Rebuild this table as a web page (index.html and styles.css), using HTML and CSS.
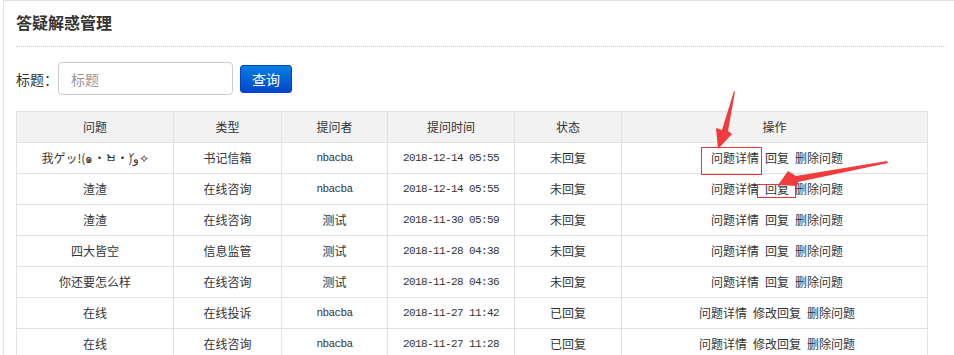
FILE: index.html
```html
<!DOCTYPE html>
<html lang="zh-CN">
<head>
<meta charset="utf-8">
<title>答疑解惑管理</title>
<link rel="stylesheet" href="styles.css">
</head>
<body>
<div class="page">
  <div class="panel">
    <h2 class="title">答疑解惑管理</h2>
    <form class="search">
      <label class="search-label">标题：</label>
      <input class="search-input" type="text" placeholder="标题">
      <button class="btn" type="button">查询</button>
    </form>
    <table class="grid">
      <colgroup>
        <col class="c1"><col class="c2"><col class="c3"><col class="c4"><col class="c5"><col class="c6">
      </colgroup>
      <thead>
        <tr><th>问题</th><th>类型</th><th>提问者</th><th>提问时间</th><th>状态</th><th>操作</th></tr>
      </thead>
      <tbody>
        <tr><td>我ゲッ!(๑•̀ㅂ•́)و✧</td><td>书记信箱</td><td class="mono">nbacba</td><td class="mono">2018-12-14 05:55</td><td>未回复</td><td class="ops"><a>问题详情</a><a>回复</a><a>删除问题</a></td></tr>
        <tr><td>渣渣</td><td>在线咨询</td><td class="mono">nbacba</td><td class="mono">2018-12-14 05:55</td><td>未回复</td><td class="ops"><a>问题详情</a><a>回复</a><a>删除问题</a></td></tr>
        <tr><td>渣渣</td><td>在线咨询</td><td>测试</td><td class="mono">2018-11-30 05:59</td><td>未回复</td><td class="ops"><a>问题详情</a><a>回复</a><a>删除问题</a></td></tr>
        <tr><td>四大皆空</td><td>信息监管</td><td>测试</td><td class="mono">2018-11-28 04:38</td><td>未回复</td><td class="ops"><a>问题详情</a><a>回复</a><a>删除问题</a></td></tr>
        <tr><td>你还要怎么样</td><td>在线咨询</td><td>测试</td><td class="mono">2018-11-28 04:36</td><td>未回复</td><td class="ops"><a>问题详情</a><a>回复</a><a>删除问题</a></td></tr>
        <tr><td>在线</td><td>在线投诉</td><td class="mono">nbacba</td><td class="mono">2018-11-27 11:42</td><td>已回复</td><td class="ops"><a>问题详情</a><a>修改回复</a><a>删除问题</a></td></tr>
        <tr><td>在线</td><td>在线咨询</td><td class="mono">nbacba</td><td class="mono">2018-11-27 11:28</td><td>已回复</td><td class="ops"><a>问题详情</a><a>修改回复</a><a>删除问题</a></td></tr>
      </tbody>
    </table>
  </div>
  <div class="mark mark-1"></div>
  <div class="mark mark-2"></div>
  <svg class="arrows" width="954" height="355" viewBox="0 0 954 355">
    <polygon class="arrow" points="734,91 735,92 728,131 732,134 718,149 716,128 722,130"/>
    <polygon class="arrow" points="887,161 888,163 798,182 797,186 778,185 788,171 796,176"/>
  </svg>
</div>
</body>
</html>
```

FILE: styles.css
```css
html, body {
  margin: 0;
  padding: 0;
  background: #fff;
}

body {
  font-family: "Noto Sans CJK SC", "Noto Sans", sans-serif;
  color: #333;
  font-size: 12px;
}

.page {
  position: relative;
  width: 954px;
  height: 355px;
  overflow: hidden;
  padding-left: 3px;
  box-sizing: border-box;
}

.panel {
  border-top: 1px solid #e3e3e3;
  border-left: 1px solid #e3e3e3;
  padding: 0 8px 0 12px;
  width: 951px;
  box-sizing: border-box;
}

.title {
  margin: 0;
  padding: 10px 0 12px;
  font-size: 16px;
  line-height: 23px;
  font-weight: bold;
  color: #333;
  border-bottom: 1px dotted #c8c8c8;
}

.search {
  display: flex;
  align-items: center;
  margin: 15px 0 0;
  height: 33px;
}

.search-label {
  font-size: 14px;
  color: #333;
  width: 42px;
}

.search-input {
  width: 175px;
  height: 33px;
  box-sizing: border-box;
  border: 1px solid #ccc;
  border-radius: 4px;
  padding: 0 12px;
  font-family: "Noto Sans CJK SC", sans-serif;
  font-size: 14px;
  color: #555;
  outline: none;
}

.search-input::placeholder {
  color: #999;
}

.btn {
  margin-left: 7px;
  width: 52px;
  height: 28px;
  border: 1px solid #0044cc;
  border-radius: 3px;
  background: linear-gradient(#0a7ee0, #0046cc);
  color: #fff;
  font-family: "Noto Sans CJK SC", sans-serif;
  font-size: 14px;
  padding: 0;
  line-height: 26px;
}

.grid {
  margin-top: 16px;
  width: 911px;
  border-collapse: collapse;
  table-layout: fixed;
}

.c1 { width: 157px; }
.c2 { width: 108px; }
.c3 { width: 106px; }
.c4 { width: 127px; }
.c5 { width: 107px; }
.c6 { width: 306px; }

.grid th,
.grid td {
  border: 1px solid #e2e2e2;
  height: 30px;
  padding: 0;
  text-align: center;
  font-size: 12px;
  font-weight: normal;
  color: #333;
  line-height: 16px;
  white-space: nowrap;
}

.grid th {
  background: #f2f2f2;
}

.grid td.mono {
  font-family: "Liberation Mono", monospace;
  font-size: 11px;
  letter-spacing: -0.6px;
}

.grid td.ops {
  padding-left: 5px;
}

.ops a {
  color: #333;
  margin: 0 3px;
}

.mark {
  position: absolute;
  border: 1px solid #ee3333;
  box-sizing: border-box;
}

.mark-1 {
  left: 701px;
  top: 147px;
  width: 61px;
  height: 28px;
}

.mark-2 {
  left: 757px;
  top: 184px;
  width: 39px;
  height: 14px;
}

.arrows {
  position: absolute;
  left: 0;
  top: 0;
  pointer-events: none;
}

.arrow {
  fill: #f03c3c;
}
```
